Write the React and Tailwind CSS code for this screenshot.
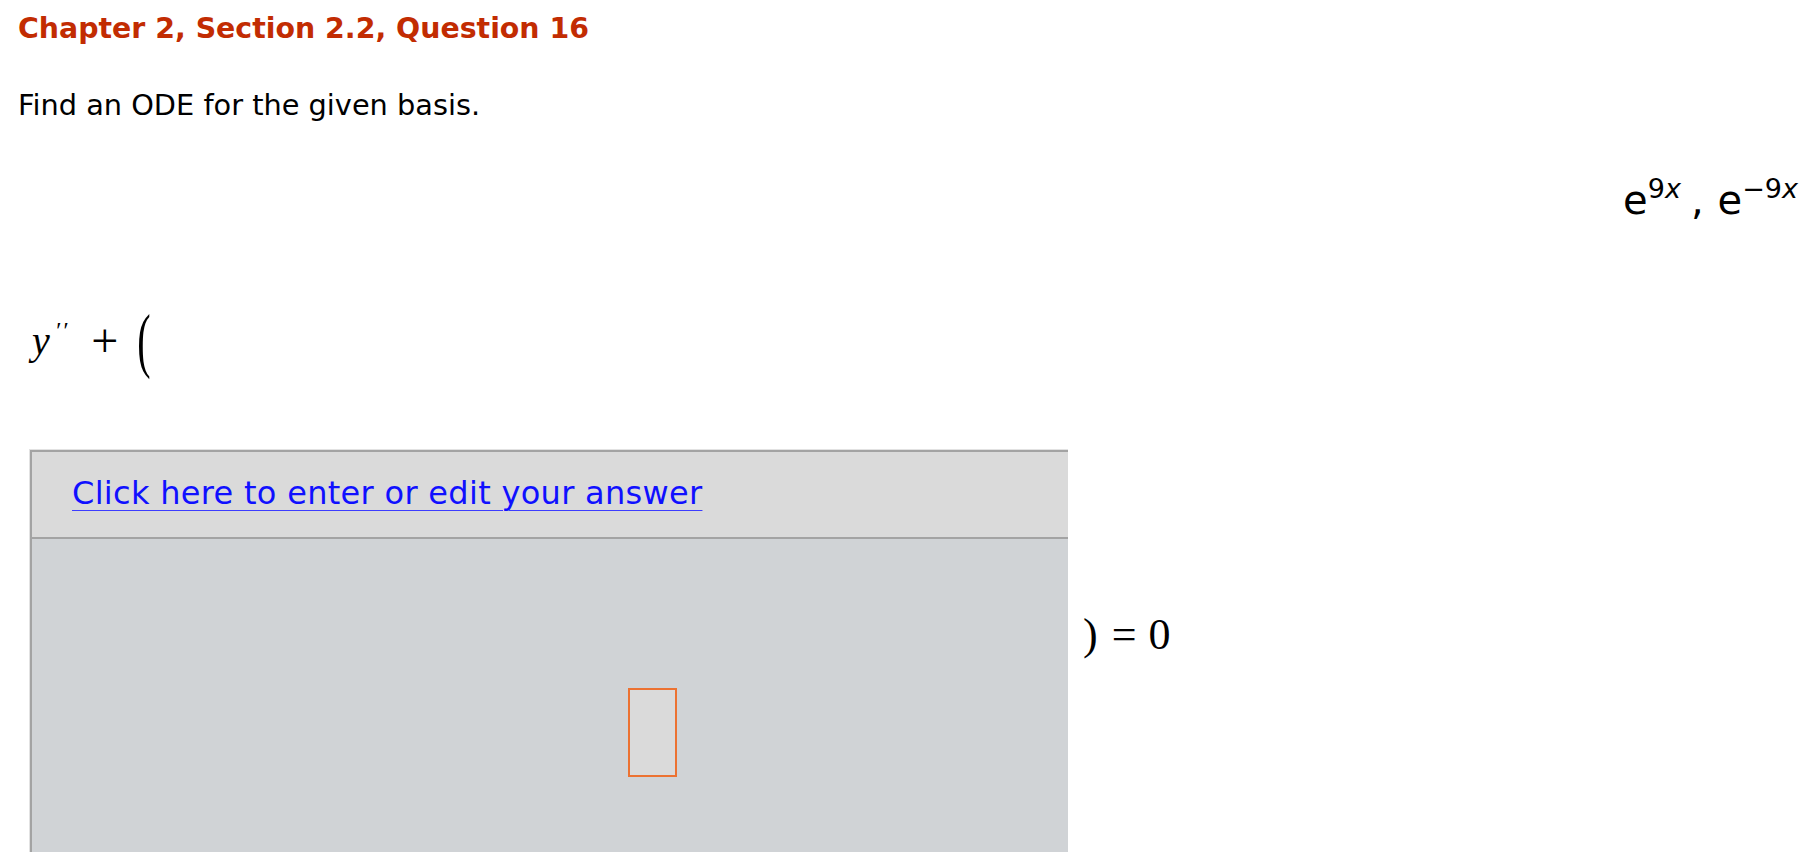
export default function App() {
  return (
    <div className="min-h-screen w-full bg-white font-['DejaVu_Sans',sans-serif] text-black">
      <div className="pl-[18px] pt-[12px]">
        <h1 className="text-[28.4px] font-bold leading-[34px] text-[#c22c02]">Chapter 2, Section 2.2, Question 16</h1>
        <p className="mt-[41px] text-[28.8px] leading-[36px]">Find an ODE for the given basis.</p>
      </div>

      <div className="mt-[41px] flex justify-end pr-[20px]">
        <div className="text-[40px] leading-[50px]">
          e<span className="text-[27px] align-[16px]">9<i>x</i></span>
          <span className="ml-[10px] mr-[14px]">,</span>
          e<span className="text-[27px] align-[16px]">−9<i>x</i></span>
        </div>
      </div>

      <div className="mt-[80px] flex items-center pl-[32px] font-['Liberation_Serif',serif] leading-[72px]">
        <span className="text-[40px] italic">y</span>
        <span className="-mt-[22px] ml-[5px] text-[24px] italic tracking-[2px]">′′</span>
        <span className="ml-[22px] text-[48px]">+</span>
        <span className="ml-[19px] inline-block scale-y-[1.8] text-[40px] font-light">(</span>
      </div>

      <div className="mt-[72px] flex items-start pl-[29px]">
        <div className="w-[1039px] border-l border-t border-[#e2e2e2]">
          <div className="border-l-[2px] border-t-[2px] border-[#a3a3a3]">
            <div className="h-[85px] bg-[#dadada] pl-[40px] pt-[22px]">
              <a href="#" className="text-[32px] leading-[38px] tracking-[0.3px] text-[#1010ff] underline decoration-[#3c3cff] decoration-1 underline-offset-[6px]">
                Click here to enter or edit your answer
              </a>
            </div>
            <div className="h-[2px] bg-[#a3a3a3]"></div>
            <div className="h-[313px] bg-[#d0d3d6] pl-[596px] pt-[149px]">
              <div className="h-[89px] w-[49px] border-[2px] border-[#ec7232] bg-[#dadada]"></div>
            </div>
          </div>
        </div>
        <div className="ml-[15px] mt-[160px] flex items-center font-['Liberation_Serif',serif] text-[44px] leading-[52px]">
          <span>)</span>
          <span className="ml-[14px]">=</span>
          <span className="ml-[12px]">0</span>
        </div>
      </div>
    </div>
  )
}
